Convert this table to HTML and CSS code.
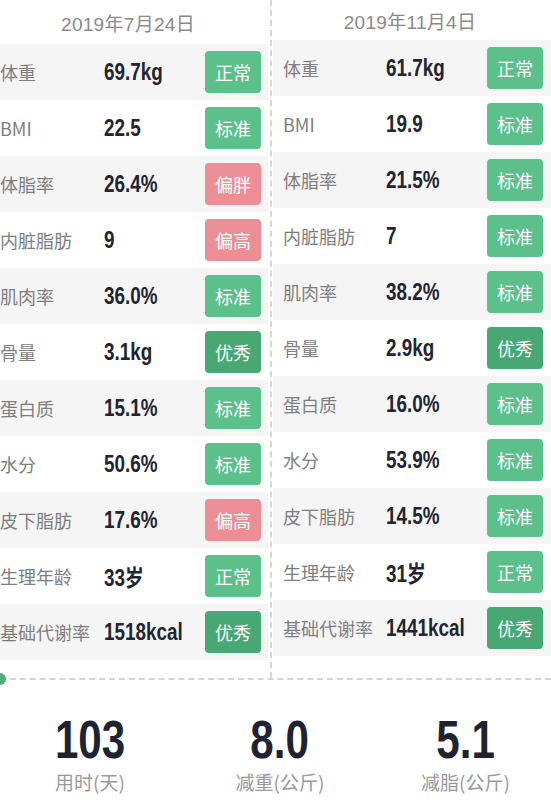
FILE: index.html
```html
<!DOCTYPE html>
<html lang="zh">
<head>
<meta charset="utf-8">
<title>对比</title>
<link rel="stylesheet" href="styles.css">
</head>
<body>
<div class="page">
  <div class="compare">
    <div class="col col-left">
      <div class="date date-left">2019年7月24日</div>
      <div class="row gray"><span class="label">体重</span><span class="value">69.7kg</span><span class="badge ok">正常</span></div>
      <div class="row"><span class="label">BMI</span><span class="value">22.5</span><span class="badge ok">标准</span></div>
      <div class="row gray"><span class="label">体脂率</span><span class="value">26.4%</span><span class="badge warn">偏胖</span></div>
      <div class="row"><span class="label">内脏脂肪</span><span class="value">9</span><span class="badge warn">偏高</span></div>
      <div class="row gray"><span class="label">肌肉率</span><span class="value">36.0%</span><span class="badge ok">标准</span></div>
      <div class="row"><span class="label">骨量</span><span class="value">3.1kg</span><span class="badge good">优秀</span></div>
      <div class="row gray"><span class="label">蛋白质</span><span class="value">15.1%</span><span class="badge ok">标准</span></div>
      <div class="row"><span class="label">水分</span><span class="value">50.6%</span><span class="badge ok">标准</span></div>
      <div class="row gray"><span class="label">皮下脂肪</span><span class="value">17.6%</span><span class="badge warn">偏高</span></div>
      <div class="row"><span class="label">生理年龄</span><span class="value">33岁</span><span class="badge ok">正常</span></div>
      <div class="row gray"><span class="label">基础代谢率</span><span class="value">1518kcal</span><span class="badge good">优秀</span></div>
    </div>
    <div class="col col-right">
      <div class="date date-right">2019年11月4日</div>
      <div class="row gray"><span class="label">体重</span><span class="value">61.7kg</span><span class="badge ok">正常</span></div>
      <div class="row"><span class="label">BMI</span><span class="value">19.9</span><span class="badge ok">标准</span></div>
      <div class="row gray"><span class="label">体脂率</span><span class="value">21.5%</span><span class="badge ok">标准</span></div>
      <div class="row"><span class="label">内脏脂肪</span><span class="value">7</span><span class="badge ok">标准</span></div>
      <div class="row gray"><span class="label">肌肉率</span><span class="value">38.2%</span><span class="badge ok">标准</span></div>
      <div class="row"><span class="label">骨量</span><span class="value">2.9kg</span><span class="badge good">优秀</span></div>
      <div class="row gray"><span class="label">蛋白质</span><span class="value">16.0%</span><span class="badge ok">标准</span></div>
      <div class="row"><span class="label">水分</span><span class="value">53.9%</span><span class="badge ok">标准</span></div>
      <div class="row gray"><span class="label">皮下脂肪</span><span class="value">14.5%</span><span class="badge ok">标准</span></div>
      <div class="row"><span class="label">生理年龄</span><span class="value">31岁</span><span class="badge ok">正常</span></div>
      <div class="row gray"><span class="label">基础代谢率</span><span class="value">1441kcal</span><span class="badge good">优秀</span></div>
    </div>
  </div>
  <div class="divider"><span class="dot"></span></div>
  <div class="stats">
    <div class="stat"><div class="num">103</div><div class="cap">用时(天)</div></div>
    <div class="stat"><div class="num">8.0</div><div class="cap">减重(公斤)</div></div>
    <div class="stat"><div class="num">5.1</div><div class="cap">减脂(公斤)</div></div>
  </div>
</div>
</body>
</html>
```

FILE: styles.css
```css
* { box-sizing: border-box; }
html, body {
  margin: 0;
  padding: 0;
  background: #ffffff;
}
body {
  width: 551px;
  height: 800px;
  overflow: hidden;
  font-family: "Noto Sans CJK SC", "Noto Sans", sans-serif;
}
.page {
  display: flex;
  flex-direction: column;
}
.compare {
  display: flex;
  height: 678px;
}
.col {
  display: flex;
  flex-direction: column;
}
.col-left {
  width: 270px;
  padding-right: 2px;
}
.col-right {
  flex: 1;
  border-left: 2px dashed #d6d6d6;
  padding-left: 1px;
}
.date {
  display: flex;
  align-items: center;
  justify-content: center;
  font-family: "Liberation Sans", "Noto Sans CJK SC", sans-serif;
  font-size: 19px;
  color: #8a8a8a;
  letter-spacing: 0.3px;
}
.date-left { height: 44px; width: 256px; }
.date-right { height: 40px; padding-right: 4px; }
.row {
  display: grid;
  grid-template-columns: 104px 101px 56px;
  align-items: center;
  height: 56px;
}
.col-right .row {
  padding-left: 10px;
  grid-template-columns: 103px 101px 56px;
}
.row.gray { background: #f5f5f6; }
.label {
  font-size: 18px;
  color: #7e7e7e;
  white-space: nowrap;
  font-family: "Noto Sans CJK SC", sans-serif;
}
.value {
  justify-self: start;
  display: inline-block;
  font-family: "Liberation Sans", "Noto Sans CJK SC", sans-serif;
  font-weight: 700;
  font-size: 23px;
  color: #22242f;
  white-space: nowrap;
  transform: scaleX(0.82);
  transform-origin: left center;
}
.badge {
  height: 42px;
  border-radius: 4px;
  display: flex;
  align-items: center;
  justify-content: center;
  color: #ffffff;
  font-size: 18px;
  font-family: "Noto Sans CJK SC", sans-serif;
}
.badge.ok { background: #5cc08b; }
.badge.good { background: #48a874; }
.badge.warn { background: #ec8e96; }
.divider {
  position: relative;
  height: 0;
  border-top: 2px dashed #d4d4d4;
}
.dot {
  position: absolute;
  left: -6px;
  top: -7px;
  width: 12px;
  height: 12px;
  border-radius: 50%;
  background: #4cae76;
}
.stats {
  display: grid;
  grid-template-columns: 180px 200px 171px;
  padding-top: 32px;
}
.stat {
  display: flex;
  flex-direction: column;
  align-items: center;
}
.num {
  font-family: "Liberation Sans", sans-serif;
  font-weight: 700;
  font-size: 54px;
  line-height: 54px;
  color: #1f2230;
  transform: scaleX(0.78);
}
.cap {
  margin-top: 4px;
  font-size: 19px;
  line-height: 24px;
  color: #9a9a9a;
}
```
